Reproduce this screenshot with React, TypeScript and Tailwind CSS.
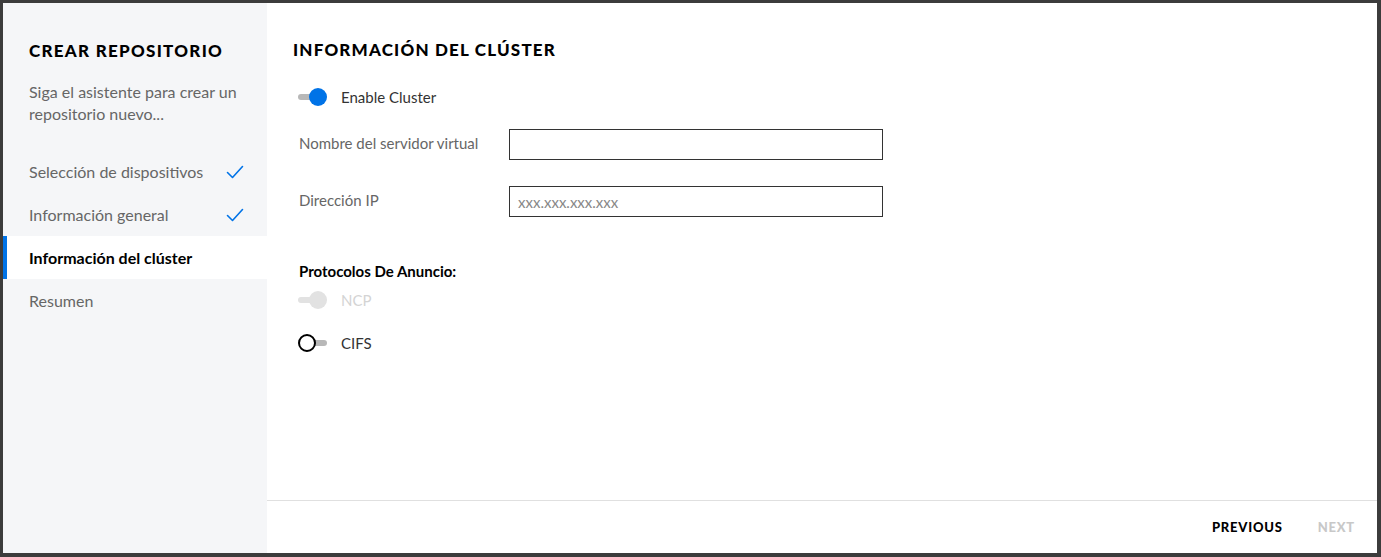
import React from 'react'

const body = { fontFamily: 'Lato, "Open Sans", sans-serif' }

function Check() {
    return (
        <svg width="18" height="14" viewBox="0 0 18 14" fill="none" stroke="#0073e7" strokeWidth="1.6" strokeLinecap="round" strokeLinejoin="round">
            <path d="M1.5 7.5 L6.5 12.5 L16.5 1.5" />
        </svg>
    )
}

function Toggle({ state }: { state: 'on' | 'disabled' | 'off' }) {
    if (state === 'off') {
        return (
            <div className="relative h-[18px] w-[30px]">
                <div className="absolute left-[14px] top-[6px] h-[6px] w-[15px] rounded-r-full bg-[#b8b8b8]" />
                <div className="absolute left-0 top-0 h-[18px] w-[18px] rounded-full border-2 border-black bg-white" />
            </div>
        )
    }
    const track = state === 'on' ? 'bg-[#b8b8b8]' : 'bg-[#e2e2e2]'
    const knob = state === 'on' ? 'bg-[#0073e7]' : 'bg-[#e2e2e2]'
    return (
        <div className="relative h-[18px] w-[30px]">
            <div className={`absolute left-0 top-[6px] h-[6px] w-[18px] rounded-l-full ${track}`} />
            <div className={`absolute left-[11px] top-0 h-[18px] w-[18px] rounded-full ${knob}`} />
        </div>
    )
}

export default function App() {
    const steps = [
        { label: 'Selección de dispositivos', done: true },
        { label: 'Información general', done: true },
        { label: 'Información del clúster', active: true },
        { label: 'Resumen' },
    ]
    return (
        <div className="h-[557px] w-[1381px] bg-[#3c3c3c] pb-[4px] pl-[3px] pr-[4px] pt-[3px]" style={body}>
            <div className="flex h-full w-full">
                {/* sidebar */}
                <div className="flex w-[264px] flex-col bg-[#f5f6f8]">
                    <div className="pl-[26px] pt-[38px]">
                        <div className="text-[17px] font-black leading-[20px] tracking-[0.075em] text-black">CREAR REPOSITORIO</div>
                        <div className="mt-[20px] pr-[20px] text-[16px] leading-[22px] text-[#666]">Siga el asistente para crear un repositorio nuevo...</div>
                    </div>
                    <div className="mt-[25px] flex flex-col">
                        {steps.map((s) => (
                            <div
                                key={s.label}
                                className={`flex h-[43px] items-center justify-between pl-[26px] pr-[23px] text-[16px] ${s.active ? 'relative bg-white font-bold text-black' : 'text-[#666]'}`}
                            >
                                {s.active && <div className="absolute left-0 top-0 h-full w-[4px] bg-[#0073e7]" />}
                                <span>{s.label}</span>
                                {s.done && <Check />}
                            </div>
                        ))}
                    </div>
                </div>

                {/* main */}
                <div className="flex flex-1 flex-col bg-white">
                    <div className="flex-1 pl-[26px] pt-[37px]">
                        <div className="text-[17px] font-black leading-[20px] tracking-[0.07em] text-black">INFORMACIÓN DEL CLÚSTER</div>

                        <div className="mt-[26px] flex items-center gap-[13px] pl-[5px]">
                            <Toggle state="on" />
                            <span className="text-[15px] text-[#333]">Enable Cluster</span>
                        </div>

                        <div className="mt-[20px] flex flex-col gap-[26px] pl-[6px]">
                            <div className="flex items-start">
                                <div className="w-[210px] pt-[3px] text-[15px] text-[#666]">Nombre del servidor virtual</div>
                                <div className="h-[31px] w-[374px] border border-[#333]" />
                            </div>
                            <div className="flex items-start">
                                <div className="w-[210px] pt-[3px] text-[15px] text-[#666]">Dirección IP</div>
                                <div className="flex h-[31px] w-[374px] items-center border border-[#333] px-[8px] pt-[2px] text-[15px] text-[#888]">xxx.xxx.xxx.xxx</div>
                            </div>
                        </div>

                        <div className="mt-[44px] pl-[6px] text-[15px] font-bold leading-[20px] text-black">Protocolos De Anuncio:</div>
                        <div className="mt-[8px] flex items-center gap-[13px] pl-[5px]">
                            <Toggle state="disabled" />
                            <span className="text-[15px] text-[#d4d4d4]">NCP</span>
                        </div>
                        <div className="mt-[21px] flex items-center gap-[13px] pl-[5px]">
                            <Toggle state="off" />
                            <span className="text-[15px] text-[#333]">CIFS</span>
                        </div>
                    </div>
                    <div className="flex h-[53px] items-center justify-end gap-[35px] border-t border-[#e0e0e0] pr-[22px] pt-[1px] text-[13px] font-black tracking-[0.06em]">
                        <span className="text-black">PREVIOUS</span>
                        <span className="text-[#c8c8c8]">NEXT</span>
                    </div>
                </div>
            </div>
        </div>
    )
}
